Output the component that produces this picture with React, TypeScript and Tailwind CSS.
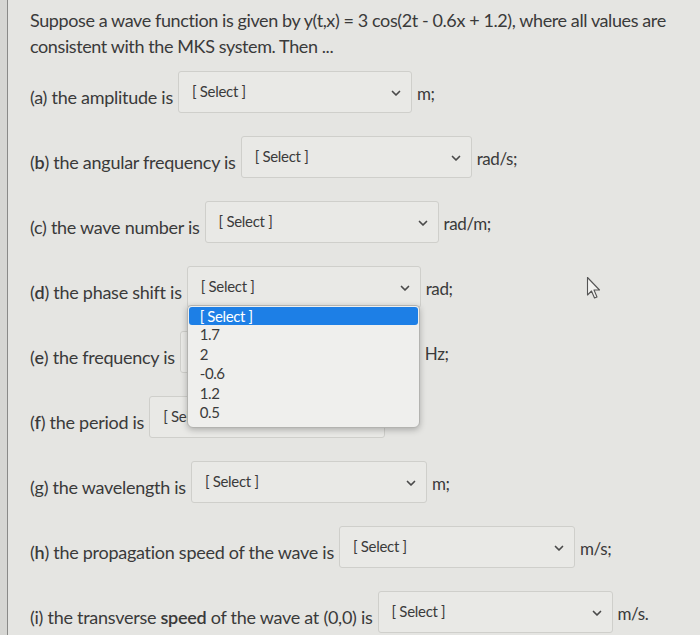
import React from "react";

const Chevron = () => (
  <svg width="10" height="7" viewBox="0 0 10 7" className="shrink-0">
    <path d="M1.5 1.5 L5 5 L8.5 1.5" fill="none" stroke="#4a4a4a" strokeWidth="1.7" strokeLinecap="round" strokeLinejoin="round" />
  </svg>
);

const Select = ({ w }: { w: number }) => (
  <div
    className="relative h-[42px] shrink-0 rounded-[3px] border border-[#cfcfcb] bg-[#e9e9e6] flex items-start justify-between pl-[13px] pr-[10px] pt-[10px]"
    style={{ width: w }}
  >
    <span className="text-[15px] leading-[18px] text-[#3b3b3b] tracking-[-0.02em]">[ Select ]</span>
    <span className="mt-[8px]">
      <Chevron />
    </span>
  </div>
);

type RowProps = {
  letter: string;
  bold?: boolean;
  label: React.ReactNode;
  w: number;
  unit: string;
  children?: React.ReactNode;
};

const Row = ({ letter, bold, label, w, unit, children }: RowProps) => (
  <div className="relative flex items-end">
    <span className="pb-[5px] text-[18px] leading-[22px] whitespace-nowrap tracking-[-0.015em]">
      (<span className={bold ? "font-semibold" : ""}>{letter}</span>) {label}
    </span>
    <div className="relative ml-[5px]">
      <Select w={w} />
      {children}
    </div>
    <span className="ml-[5px] pb-[8px] text-[17px] leading-[22px] whitespace-nowrap">{unit}</span>
  </div>
);

const Dropdown = () => (
  <div className="absolute left-0 top-[39px] z-10 w-[233px] rounded-b-[6px] rounded-t-[4px] border border-[#b3b3b0] bg-[#efefed] pb-[4px] shadow-[0_2px_6px_rgba(0,0,0,0.25)]">
    <div className="mx-[1px] mt-[1px] rounded-[3px] bg-[#1d7fe6] pl-[11px] text-[15px] leading-[18px] text-white">[ Select ]</div>
    {["1.7", "2", "-0.6", "1.2", "0.5"].map((v) => (
      <div key={v} className="pl-[12px] text-[15px] leading-[19.5px] text-[#3b3b3b]">
        {v}
      </div>
    ))}
  </div>
);

export default function App() {
  return (
    <div
      className="relative flex h-[635px] w-[700px] overflow-hidden bg-[#e5e5e2] text-[#3a3a3a]"
      style={{ fontFamily: "Lato, 'Noto Sans', sans-serif" }}
    >
      <div className="w-[8px] shrink-0 border-r border-[#8a8a88] bg-[#d6d6d3]" />
      <div className="flex flex-col pl-[22px] pt-[7px] tracking-[-0.025em]">
        <p className="text-[18px] leading-[26px]">
          Suppose a wave function is given by y(t,x) = 3 cos(2t - 0.6x + 1.2), where all values are
          <br />
          consistent with the MKS system. Then ...
        </p>
        <div className="mt-[12px] flex flex-col gap-[23px]">
          <Row letter="a" label="the amplitude is" w={234} unit="m;" />
          <Row letter="b" bold label="the angular frequency is" w={231} unit="rad/s;" />
          <Row letter="c" label="the wave number is" w={234} unit="rad/m;" />
          <div className="relative z-10">
            <Row letter="d" bold label="the phase shift is" w={234} unit="rad;">
              <Dropdown />
            </Row>
          </div>
          <Row letter="e" bold label="the frequency is" w={240} unit="Hz;" />
          <Row letter="f" bold label="the period is" w={236} unit="s;" />
          <Row letter="g" label="the wavelength is" w={236} unit="m;" />
          <Row letter="h" bold label="the propagation speed of the wave is" w={236} unit="m/s;" />
          <Row
            letter="i"
            label={
              <>
                the transverse <span className="font-semibold">speed</span> of the wave at (0,0) is
              </>
            }
            w={235}
            unit="m/s."
          />
        </div>
      </div>
      <svg className="absolute left-[586px] top-[276px]" width="16" height="24" viewBox="0 0 16 24">
        <path d="M1.5 1.5 L1.5 19 L5.5 15 L8.5 22 L11 21 L8 14 L13.5 14 Z" fill="#f2f2f0" stroke="#555" strokeWidth="1.1" strokeLinejoin="round" />
      </svg>
    </div>
  );
}
